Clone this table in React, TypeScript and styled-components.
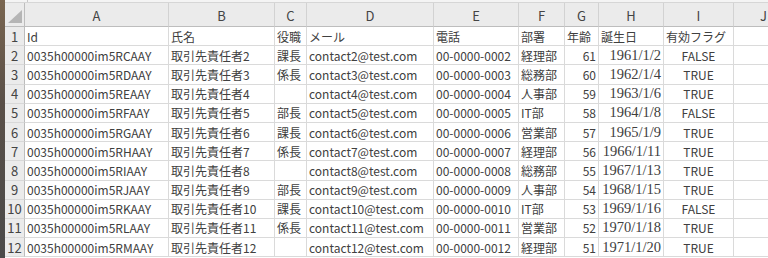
import * as React from 'react';
import styled, { createGlobalStyle } from 'styled-components';

const GlobalStyle = createGlobalStyle`
  html, body {
    margin: 0;
    padding: 0;
    background: #ffffff;
    overflow: hidden;
  }
  body {
    font-family: 'Noto Sans CJK JP', 'Noto Sans', sans-serif;
  }
`;

type Align = 'left' | 'right' | 'center';

const COLUMNS = [
  { label: 'A', width: 144 },
  { label: 'B', width: 106 },
  { label: 'C', width: 32 },
  { label: 'D', width: 127 },
  { label: 'E', width: 85 },
  { label: 'F', width: 46 },
  { label: 'G', width: 34 },
  { label: 'H', width: 65 },
  { label: 'I', width: 70 },
  { label: 'J', width: 60 },
];

const ALIGNS: Align[] = ['left', 'left', 'left', 'left', 'left', 'left', 'right', 'right', 'center', 'left'];

const HEADER = ['Id', '氏名', '役職', 'メール', '電話', '部署', '年齢', '誕生日', '有効フラグ', ''];

const rows: string[][] = [
  ['0035h00000im5RCAAY', '取引先責任者2', '課長', 'contact2@test.com', '00-0000-0002', '経理部', '61', '1961/1/2', 'FALSE'],
  ['0035h00000im5RDAAY', '取引先責任者3', '係長', 'contact3@test.com', '00-0000-0003', '総務部', '60', '1962/1/4', 'TRUE'],
  ['0035h00000im5REAAY', '取引先責任者4', '', 'contact4@test.com', '00-0000-0004', '人事部', '59', '1963/1/6', 'TRUE'],
  ['0035h00000im5RFAAY', '取引先責任者5', '部長', 'contact5@test.com', '00-0000-0005', 'IT部', '58', '1964/1/8', 'FALSE'],
  ['0035h00000im5RGAAY', '取引先責任者6', '課長', 'contact6@test.com', '00-0000-0006', '営業部', '57', '1965/1/9', 'TRUE'],
  ['0035h00000im5RHAAY', '取引先責任者7', '係長', 'contact7@test.com', '00-0000-0007', '経理部', '56', '1966/1/11', 'TRUE'],
  ['0035h00000im5RIAAY', '取引先責任者8', '', 'contact8@test.com', '00-0000-0008', '総務部', '55', '1967/1/13', 'TRUE'],
  ['0035h00000im5RJAAY', '取引先責任者9', '部長', 'contact9@test.com', '00-0000-0009', '人事部', '54', '1968/1/15', 'TRUE'],
  ['0035h00000im5RKAAY', '取引先責任者10', '課長', 'contact10@test.com', '00-0000-0010', 'IT部', '53', '1969/1/16', 'FALSE'],
  ['0035h00000im5RLAAY', '取引先責任者11', '係長', 'contact11@test.com', '00-0000-0011', '営業部', '52', '1970/1/18', 'TRUE'],
  ['0035h00000im5RMAAY', '取引先責任者12', '', 'contact12@test.com', '00-0000-0012', '経理部', '51', '1971/1/20', 'TRUE'],
];

export default function App() {
  return (
    <>
      <GlobalStyle />
      <Window>
        <DesktopEdge />
        <Sheet>
          <TopStrip>
            <TopStripCorner />
          </TopStrip>
          <Grid>
            <CornerCell>
              <svg width="17" height="15" viewBox="0 0 17 15">
                <polygon points="2,14 16,14 16,1" fill="#b5b5b5" />
              </svg>
            </CornerCell>
            {COLUMNS.map((col) => (
              <ColumnHeader key={col.label}>{col.label}</ColumnHeader>
            ))}

            <RowHeader>1</RowHeader>
            {HEADER.map((text, i) => (
              <Cell key={i} $align="left">
                {text}
              </Cell>
            ))}

            {rows.map((row, r) => (
              <React.Fragment key={r}>
                <RowHeader>{r + 2}</RowHeader>
                {row.map((text, c) => (
                  <Cell key={c} $align={ALIGNS[c]} $serif={c === 7}>
                    {text}
                  </Cell>
                ))}
                <Cell $align="left" />
              </React.Fragment>
            ))}
          </Grid>
        </Sheet>
      </Window>
    </>
  );
}

const Window = styled.div`
  display: flex;
  width: 768px;
  height: 258px;
  overflow: hidden;
`;

const DesktopEdge = styled.div`
  width: 5px;
  flex-shrink: 0;
  background: linear-gradient(180deg, #7a6650 0%, #5a5048 40%, #4a4a4a 100%);
`;

const Sheet = styled.div`
  display: flex;
  flex-direction: column;
  flex: 1;
  min-width: 0;
`;

const TopStrip = styled.div`
  height: 3px;
  background: #f4f4f4;
  border-bottom: 1px solid #d6d6d6;
  box-sizing: border-box;
  display: flex;
`;

const TopStripCorner = styled.div`
  width: 22px;
  border-right: 1px solid #c8c8c8;
`;

const Grid = styled.div`
  display: grid;
  grid-template-columns: 20px ${COLUMNS.map((c) => `${c.width}px`).join(' ')};
  grid-template-rows: 24px;
  grid-auto-rows: 19.2px;
  font-size: 12px;
  color: #404040;
`;

const HeaderBase = styled.div`
  box-sizing: border-box;
  background: #ebebeb;
  color: #444444;
  display: flex;
  align-items: center;
  justify-content: center;
  font-size: 13px;
  white-space: nowrap;
  overflow: hidden;
`;

const CornerCell = styled(HeaderBase)`
  border-right: 1px solid #bdbdbd;
  border-bottom: 1px solid #bdbdbd;
  align-items: flex-end;
  justify-content: flex-end;
  padding: 0 1px 2px 0;
`;

const ColumnHeader = styled(HeaderBase)`
  border-right: 1px solid #d2d2d2;
  border-bottom: 1px solid #bdbdbd;
  padding-top: 2px;
`;

const RowHeader = styled(HeaderBase)`
  border-right: 1px solid #bdbdbd;
  border-bottom: 1px solid #d8d8d8;
`;

const Cell = styled.div<{ $align: Align; $serif?: boolean }>`
  box-sizing: border-box;
  border-right: 1px solid #dadada;
  border-bottom: 1px solid #dadada;
  background: #ffffff;
  display: flex;
  align-items: center;
  justify-content: ${(p) =>
    p.$align === 'right' ? 'flex-end' : p.$align === 'center' ? 'center' : 'flex-start'};
  padding: 0 2px;
  white-space: nowrap;
  overflow: visible;
  font-family: ${(p) =>
    p.$serif
      ? "'Liberation Serif', 'Noto Sans CJK JP', serif"
      : "'Noto Sans CJK JP', 'Noto Sans', sans-serif"};
  font-size: ${(p) => (p.$serif ? '14.5px' : '12px')};
`;
